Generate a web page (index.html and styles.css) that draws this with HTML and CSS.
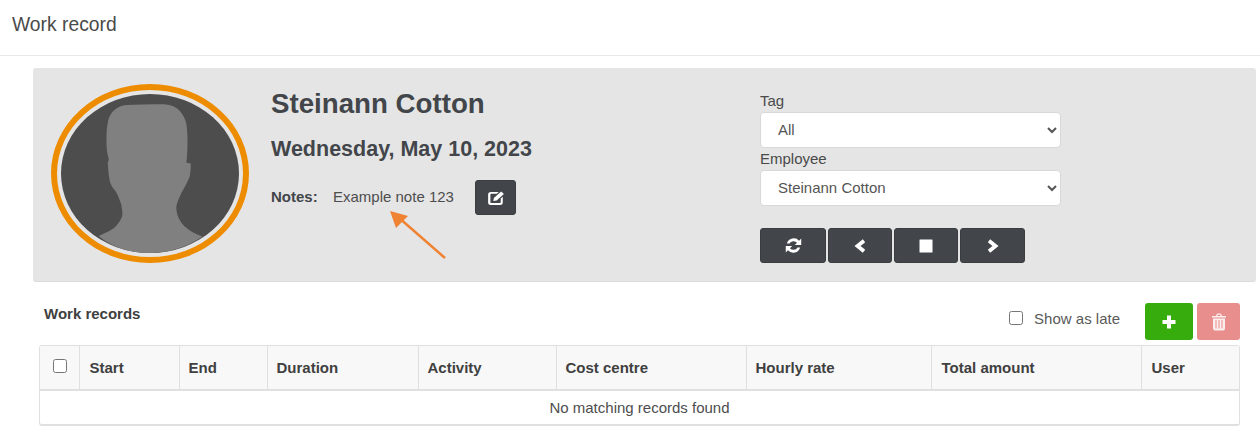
FILE: index.html
```html
<!DOCTYPE html>
<html lang="en">
<head>
<meta charset="utf-8">
<title>Work record</title>
<link rel="stylesheet" href="styles.css">
</head>
<body>
<header class="page-header">Work record</header>
<main class="content">
  <section class="panel">
    <div class="avatar">
      <svg class="avatar-svg" viewBox="0 0 176 158" preserveAspectRatio="none" aria-hidden="true">
        <ellipse cx="88" cy="79" rx="88" ry="79" fill="#4d4d4d"/>
        <path class="avatar-person" d="M37.3 141C46 137 51 135 54 131.7C58 127 61 123 60.7 118.3C60.5 115 60 113 59.7 110C58 105 56 100 54 96.7C51 93 49 90 48.3 86.7C47 80 46.5 74 46.3 68.3L47.3 65C45.5 58 45 54 45 48.3C45 40 45 34 46.3 28.3C47.5 22 50 18 54 15C58 12 61 11.3 65.7 11C78 10.3 90 10.2 102.3 10.3C109 10.8 114 13 117.3 16.7C121 21 123 25 124 30C125 37 125.3 44 125 51.7C125 58 124.5 63 124 68.3L128.3 69C128.3 74 128 78 127.3 81.7C125 88 122 93 119 98.3C117 103 115 107 114 111.7C114 115 114.5 118 115.7 121.7C117 125 119 128 122.3 131.7C127 136 133 139 139.7 141.7C125 152 108 158 88 158C68 158 50 152 37.3 141Z"/>
      </svg>
    </div>
    <div class="info">
      <h1 class="name">Steinann Cotton</h1>
      <h2 class="date">Wednesday, May 10, 2023</h2>
      <div class="notes">
        <strong class="notes-label">Notes:</strong>
        <span class="notes-text">Example note 123</span>
        <button class="btn btn-dark btn-edit" type="button" aria-label="Edit note">
          <svg class="icon icon-edit" viewBox="0 0 16 16" preserveAspectRatio="none"><path d="M3.5 2H10.5L8.7 3.8H3.7Q3 3.8 3 4.5V12.3Q3 13 3.7 13H11.5Q12.2 13 12.2 12.3V8.6L14 6.8V12.5Q14 15 11.5 15H3.5Q1 15 1 12.5V4.5Q1 2 3.5 2Z"/><path d="M12.6 1.5L15 3.9L8.6 10.4L5.6 11L6.1 7.9Z"/></svg>
        </button>
      </div>
    </div>
    <div class="filters">
      <label class="field-label" for="tag">Tag</label>
      <select class="field" id="tag"><option>All</option></select>
      <label class="field-label" for="employee">Employee</label>
      <select class="field" id="employee"><option>Steinann Cotton</option></select>
      <div class="btn-group">
        <button class="btn btn-dark btn-nav" type="button" aria-label="Refresh">
          <svg class="icon icon-lg" viewBox="0 0 16 16"><path d="M2.4 6.4A6 6 0 0 1 12.7 4L14.5 2.2V7.6H9.1L11 5.7A3.9 3.9 0 0 0 4.6 6.4Z"/><path d="M13.6 9.6A6 6 0 0 1 3.3 12L1.5 13.8V8.4H6.9L5 10.3A3.9 3.9 0 0 0 11.4 9.6Z"/></svg>
        </button>
        <button class="btn btn-dark btn-nav" type="button" aria-label="Previous">
          <svg class="icon icon-chevron" viewBox="0 0 16 16"><path d="M12 2.8L5.5 8L12 13.2"/></svg>
        </button>
        <button class="btn btn-dark btn-nav" type="button" aria-label="Stop">
          <svg class="icon" viewBox="0 0 16 16"><rect x="1.5" y="1.5" width="13" height="13" rx="0.5"/></svg>
        </button>
        <button class="btn btn-dark btn-nav" type="button" aria-label="Next">
          <svg class="icon icon-chevron" viewBox="0 0 16 16"><path d="M4 2.8L10.5 8L4 13.2"/></svg>
        </button>
      </div>
    </div>
    <svg class="arrow" viewBox="0 0 60 50" aria-hidden="true">
      <path d="M56 47L9 6" stroke="#f08233" stroke-width="2.5" fill="none"/>
      <path d="M1 0L19 5L7 17Z" fill="#f08233"/>
    </svg>
  </section>

  <section class="records">
    <div class="toolbar">
      <h3 class="records-title">Work records</h3>
      <label class="late"><input class="check" type="checkbox"> <span>Show as late</span></label>
      <button class="btn btn-add" type="button" aria-label="Add">
        <svg class="icon" viewBox="0 0 16 16"><path d="M6 1.5H10V6H14.5V10H10V14.5H6V10H1.5V6H6Z"/></svg>
      </button>
      <button class="btn btn-delete" type="button" aria-label="Delete">
        <svg class="icon icon-trash" viewBox="0 0 16 18"><path d="M5.5 1.5Q5.8 .5 6.8 .5H9.2Q10.2 .5 10.5 1.5L11 3H15V4.5H1V3H5ZM6.3 3H9.7L9.3 1.7H6.7Z"/><path fill-rule="evenodd" d="M2 5.5H14V15.5Q14 17.5 12 17.5H4Q2 17.5 2 15.5ZM4.5 7V15.5H5.5V7ZM7.5 7V15.5H8.5V7ZM10.5 7V15.5H11.5V7Z"/></svg>
      </button>
    </div>
    <div class="table-wrap">
      <table class="table">
        <thead>
          <tr>
            <th class="col-check"><input class="check" type="checkbox" aria-label="Select all"></th>
            <th class="col-start">Start</th>
            <th class="col-end">End</th>
            <th class="col-duration">Duration</th>
            <th class="col-activity">Activity</th>
            <th class="col-cost">Cost centre</th>
            <th class="col-rate">Hourly rate</th>
            <th class="col-total">Total amount</th>
            <th class="col-user">User</th>
          </tr>
        </thead>
        <tbody>
          <tr><td class="empty" colspan="9">No matching records found</td></tr>
        </tbody>
      </table>
    </div>
  </section>
</main>
</body>
</html>
```

FILE: styles.css
```css
* { box-sizing: border-box; }
html, body { margin: 0; padding: 0; }
body {
  width: 1260px;
  height: 436px;
  overflow: hidden;
  background: #fff;
  color: #404040;
  font-family: "Liberation Sans", Arial, sans-serif;
  font-size: 15px;
}
.page-header {
  height: 56px;
  padding: 15px 12px 0;
  border-bottom: 1px solid #e8e8e8;
  font-size: 19.3px;
  line-height: 20px;
  color: #4a4a4a;
}
.content { padding: 12px 4px 0 33px; }
.panel {
  position: relative;
  display: flex;
  height: 214px;
  background: #e5e5e5;
  border-radius: 3px;
  border-bottom: 1px solid #dcdcdc;
  padding: 16px 0 0 18px;
}
.avatar {
  flex: none;
  width: 198px;
  height: 179px;
  padding: 4px;
  border: 6px solid #ee8c00;
  border-radius: 50%;
}
.avatar-svg { display: block; width: 100%; height: 100%; }
.avatar-person { fill: #808080; }
.info { flex: none; width: 511px; padding: 4px 0 0 22px; }
.name {
  margin: 0;
  font-size: 27.7px;
  line-height: 32px;
  font-weight: 700;
  color: #42464a;
}
.date {
  margin: 16px 0 0;
  font-size: 21.5px;
  line-height: 26px;
  font-weight: 700;
  color: #42464a;
}
.notes { display: flex; align-items: center; margin-top: 18px; }
.notes-label { width: 62px; padding-bottom: 2px; color: #42464a; }
.notes-text { width: 142px; padding-bottom: 2px; color: #4d4d4d; }
.btn {
  display: flex;
  align-items: center;
  justify-content: center;
  padding: 0;
  border: 1px solid transparent;
  border-radius: 3px;
  cursor: pointer;
}
.btn-dark { background: #42464a; border-color: #3a3d40; color: #fff; }
.btn-edit { width: 41px; height: 35px; }
.icon { display: block; width: 16px; height: 16px; fill: currentColor; }
.icon-lg { width: 19px; height: 19px; }
.icon-edit { width: 18px; height: 16px; }
.icon-chevron { fill: none; stroke: currentColor; stroke-width: 3.8; }
.filters { flex: none; width: 301px; margin-top: 8px; }
.field-label { display: block; line-height: 18px; margin-bottom: 2px; color: #4a4a4a; }
.field {
  display: block;
  width: 100%;
  height: 36px;
  margin-bottom: 2px;
  padding: 0 0 2px 13px;
  background: #fff;
  border: 1px solid #d8d8d8;
  border-radius: 4px;
  color: #555;
  font: 15px "Liberation Sans", Arial, sans-serif;
}
.btn-group { display: flex; gap: 2px; margin-top: 22px; }
.btn-nav { width: 64px; height: 35px; }
.btn-nav:first-child { width: 66px; }
.btn-nav:last-child { width: 65px; }
.arrow {
  position: absolute;
  left: 356px;
  top: 143px;
  width: 60px;
  height: 50px;
}
.records { padding: 0 16px 0 6px; }
.toolbar { display: flex; align-items: center; height: 37px; margin-top: 21px; }
.records-title {
  flex: 1;
  margin: 0 0 15px 5px;
  font-size: 15px;
  line-height: 16px;
  font-weight: 700;
  color: #404040;
}
.late { display: flex; align-items: center; gap: 11px; margin: 0 25px 7px 0; color: #5a5a5a; }
.check { width: 14px; height: 14px; margin: 0; }
.btn-add { width: 48px; height: 37px; background: #36ad0c; color: #fff; margin-right: 4px; }
.btn-delete { width: 43px; height: 37px; background: #e88e8d; color: #fff; }
.icon-trash { height: 18px; opacity: .85; }
.table-wrap {
  margin-top: 5px;
  border: 1px solid #e0e0e0;
  border-bottom-width: 2px;
  border-radius: 3px;
  overflow: hidden;
  width: 1201px;
}
.table { width: 100%; border-collapse: collapse; table-layout: fixed; }
.table th {
  height: 44px;
  padding: 0 9px;
  background: #f8f8f8;
  border-bottom: 2px solid #e0e0e0;
  border-left: 1px solid #e0e0e0;
  text-align: left;
  font-size: 15px;
  font-weight: 700;
  color: #404040;
}
.table th:first-child { border-left: 0; text-align: center; padding: 0 0 0 1px; }
.table th.col-start, .table th.col-total, .table th.col-user { padding-left: 10px; }
.col-check { width: 39px; }
.col-start { width: 100px; }
.col-end { width: 88px; }
.col-duration { width: 151px; }
.col-activity { width: 138px; }
.col-cost { width: 190px; }
.col-rate { width: 185px; }
.col-total { width: 210px; }
.empty { height: 34px; padding-bottom: 2px; text-align: center; color: #4d4d4d; }
```
